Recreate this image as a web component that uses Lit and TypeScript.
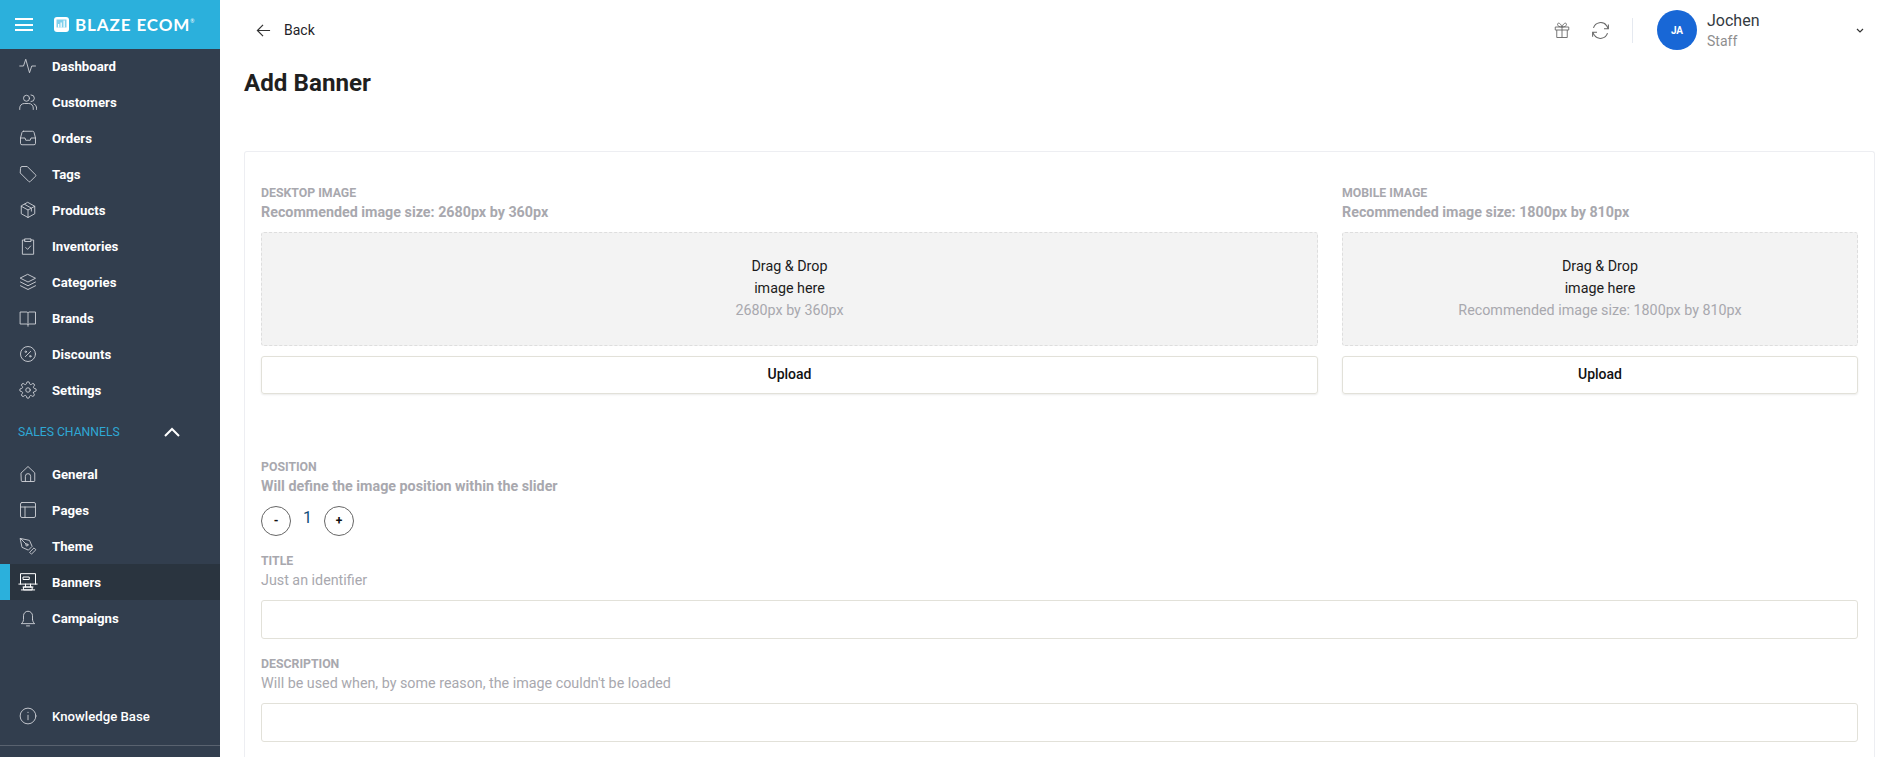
import { LitElement, css, html, svg } from "lit";
import { customElement } from "lit/decorators.js";

const icons: Record<string, unknown> = {
  pulse: svg`<path d="M1 12h5l3-9 5 18 3-9h5"/>`,
  users: svg`<circle cx="10" cy="7" r="4"/><path d="M1 22v-2a6 6 0 0 1 6-6h6a6 6 0 0 1 6 6v2M16 2.500a4.500 4.500 0 0 1 0 9M20 14.500a6 6 0 0 1 3.500 5.500v2"/>`,
  inbox: svg`<path d="M6 3h12a2 2 0 0 1 2 1.500L22 12v7a2 2 0 0 1-2 2H4a2 2 0 0 1-2-2v-7l2-7.500A2 2 0 0 1 6 3zM2 12h6l1 3h6l1-3h6"/>`,
  tag: svg`<path d="M2 4a2 2 0 0 1 2-2h7l11 11a1.500 1.500 0 0 1 0 2l-7 7a1.500 1.500 0 0 1-2 0L2 11z"/>`,
  box: svg`<path d="M12 2l9 5v10l-9 5-9-5V7zM3 7l9 5 9-5M12 12v10M7.500 4.500l9 5v4"/>`,
  clipboard: svg`<path d="M8 4H4.500v19h15V4H16M8 2.500h8v3.500H8zM9 14l2.500 2.500L15.500 12"/>`,
  layers: svg`<path d="M12 2l10 5-10 5L2 7zM2 12l10 5 10-5M2 17l10 5 10-5"/>`,
  book: svg`<path d="M2 4h9l1 1 1-1h9v16h-9l-1 1-1-1H2zM12 5v18"/>`,
  percent: svg`<circle cx="12" cy="12" r="10"/><path d="M15.500 8.500l-7 7"/><circle cx="9" cy="9" r="1"/><circle cx="15" cy="15" r="1"/>`,
  gear: svg`<circle cx="12" cy="12" r="3"/><path d="M19.400 15a1.700 1.700 0 0 0 .3 1.800l.1.100a2 2 0 1 1-2.900 2.900l-.1-.1a1.700 1.700 0 0 0-2.800 1.200V21a2 2 0 0 1-4 0v-.1a1.700 1.700 0 0 0-2.900-1.200l-.1.100a2 2 0 1 1-2.800-2.800l.1-.1a1.700 1.700 0 0 0-1.200-2.900H3a2 2 0 0 1 0-4h.1a1.700 1.700 0 0 0 1.200-2.900l-.1-.1a2 2 0 1 1 2.800-2.800l.1.100a1.700 1.700 0 0 0 2.900-1.200V3a2 2 0 0 1 4 0v.1a1.700 1.700 0 0 0 2.900 1.200l.1-.1a2 2 0 1 1 2.800 2.800l-.1.100a1.700 1.700 0 0 0 1.200 2.900h.1a2 2 0 0 1 0 4h-.1a1.700 1.700 0 0 0-1.500 1z"/>`,
  home: svg`<path d="M3 10.500L12 2l9 8.500V21a1 1 0 0 1-1 1H4a1 1 0 0 1-1-1zM8.500 22v-7a3.500 3.500 0 0 1 7 0v7"/>`,
  layout: svg`<rect x="2" y="2" width="20" height="20" rx="2"/><path d="M2 8h20M8 8v14"/>`,
  pen: svg`<path d="M2 2l12 2.500 3.500 8-5 5-8-3.500zM2 2l7.500 7.500M14.500 20l5.500-5.500 2.500 2.500-5.500 5.500z"/><circle cx="10.500" cy="10.500" r="1.500"/>`,
  monitor: svg`<path d="M3 14.500V2h18v12.500M1 14.500h22M6.500 6h7v3h-7zM9 14.500V18M15 14.500V18M6 18h12M7 21.500h10V18H7zM4 21.500h16"/>`,
  bell: svg`<path d="M18 14V9a6 6 0 1 0-12 0v5c0 3-2 5-3 5.500h18c-1-.5-3-2.500-3-5.500zM10 22.500h4"/>`,
  info: svg`<circle cx="12" cy="12" r="10.500"/><path d="M12 11v6M12 7v.5"/>`,
};

type Item = { label: string; icon: string; active?: boolean };

const mainNav: Item[] = [
  { label: "Dashboard", icon: "pulse" },
  { label: "Customers", icon: "users" },
  { label: "Orders", icon: "inbox" },
  { label: "Tags", icon: "tag" },
  { label: "Products", icon: "box" },
  { label: "Inventories", icon: "clipboard" },
  { label: "Categories", icon: "layers" },
  { label: "Brands", icon: "book" },
  { label: "Discounts", icon: "percent" },
  { label: "Settings", icon: "gear" },
];

const channelNav: Item[] = [
  { label: "General", icon: "home" },
  { label: "Pages", icon: "layout" },
  { label: "Theme", icon: "pen" },
  { label: "Banners", icon: "monitor", active: true },
  { label: "Campaigns", icon: "bell" },
];

@customElement("app-root")
export class AppRoot extends LitElement {
  static styles = css`
    :host {
      display: flex;
      height: 757px;
      overflow: hidden;
      font-family: Roboto, "Liberation Sans", sans-serif;
      background: #fff;
      color: #1f1f1f;
    }
    .sidebar {
      width: 220px;
      flex: none;
      display: flex;
      flex-direction: column;
      background: #323e4e;
      color: #fff;
    }
    .brand {
      height: 49px;
      flex: none;
      display: flex;
      align-items: center;
      padding-left: 15px;
      background: #2bb0dc;
    }
    .burger {
      width: 18px;
      display: flex;
      flex-direction: column;
      gap: 3.5px;
      margin-right: 21px;
    }
    .burger span {
      height: 2px;
      background: #fff;
    }
    .logo {
      width: 15px;
      height: 15px;
      margin-right: 6px;
    }
    .logo svg {
      display: block;
      width: 15px;
      height: 15px;
    }
    .logo-text {
      font-family: Lato, Roboto, sans-serif;
      font-size: 17px;
      font-weight: 700;
      letter-spacing: 0.9px;
      white-space: nowrap;
    }
    .logo-text sup {
      font-size: 5px;
      font-weight: 400;
      vertical-align: 8px;
      letter-spacing: 0;
      line-height: 0;
    }
    .nav {
      display: flex;
      flex-direction: column;
    }
    .nav.first {
      margin-top: -1px;
    }
    .item {
      height: 36px;
      display: flex;
      align-items: center;
      padding-left: 19px;
      font-size: 13.2px;
      font-weight: 700;
      box-sizing: border-box;
    }
    .item svg {
      width: 18px;
      height: 18px;
      flex: none;
      margin-right: 15px;
      fill: none;
      stroke: #d0d3d8;
      stroke-width: 1.2;
      stroke-linecap: round;
      stroke-linejoin: round;
    }
    .item.active {
      background: #2a343f;
      border-left: 10px solid #2bb0dc;
      padding-left: 9px;
    }
    .item.active svg {
      stroke: #fff;
      width: 20px;
      height: 20px;
      margin-left: -1px;
      margin-right: 14px;
    }
    .channels {
      height: 36px;
      margin-top: 6px;
      margin-bottom: 6px;
      padding: 0 40px 0 18px;
      display: flex;
      align-items: center;
      justify-content: space-between;
      color: #2fa8d5;
      font-size: 12.2px;
    }
    .channels svg {
      width: 16px;
      height: 10px;
      fill: none;
      stroke: #fff;
      stroke-width: 2;
    }
    .spacer {
      flex: 1;
    }
    .item.kb {
      margin-bottom: 11px;
      font-weight: 500;
    }
    .rule {
      height: 1px;
      background: #59626f;
      flex: none;
      margin-bottom: 11px;
    }
    .main {
      flex: 1;
      min-width: 0;
      display: flex;
      flex-direction: column;
    }
    .topbar {
      height: 60px;
      flex: none;
      display: flex;
      align-items: center;
      padding-left: 36px;
      box-sizing: border-box;
    }
    .back {
      display: flex;
      align-items: center;
      gap: 13px;
      font-size: 14px;
      color: #1f2328;
    }
    .back svg {
      width: 15px;
      height: 15px;
      fill: none;
      stroke: #333;
      stroke-width: 1.3;
    }
    .top-right {
      margin-left: auto;
      display: flex;
      align-items: center;
      padding-right: 35px;
    }
    .tool {
      fill: none;
      stroke: #666;
      stroke-width: 1.2;
    }
    .gift {
      width: 18px;
      height: 18px;
      margin-right: 19px;
    }
    .refresh {
      width: 21px;
      height: 21px;
      margin-right: 15px;
    }
    .divider {
      width: 1px;
      height: 25px;
      background: #e5e9f0;
      margin: 0 24px 0 6px;
    }
    .avatar {
      width: 40px;
      height: 40px;
      border-radius: 50%;
      background: #1867d6;
      color: #fff;
      font-size: 10px;
      font-weight: 700;
      display: flex;
      align-items: center;
      justify-content: center;
      margin-right: 10px;
    }
    .user {
      width: 149px;
      line-height: 1;
      padding-top: 1px;
    }
    .user-name {
      font-size: 16px;
      color: #333a3f;
      margin-bottom: 5px;
    }
    .user-role {
      font-size: 14px;
      color: #8e8e8e;
    }
    .caret {
      width: 8px;
      height: 5px;
      fill: none;
      stroke: #333;
      stroke-width: 1.2;
    }
    h1 {
      margin: 9px 0 0;
      padding-left: 24px;
      font-size: 24.2px;
      font-weight: 700;
      line-height: 28px;
      color: #1f1f1f;
    }
    .card {
      margin: 54px 24px 0;
      flex: 1;
      border: 1px solid #edeef2;
      border-bottom: 0;
      border-radius: 3px 3px 0 0;
      padding: 34px 16px 0;
      box-sizing: border-box;
      min-height: 0;
    }
    .uploads {
      display: grid;
      grid-template-columns: 1057px 516px;
      column-gap: 24px;
    }
    .label {
      font-size: 12.3px;
      font-weight: 700;
      line-height: 14px;
      color: #a8a8ae;
    }
    .hint {
      font-size: 14.3px;
      line-height: 20px;
      margin-top: 2px;
      color: #a8a8ae;
    }
    .hint.strong {
      font-weight: 700;
    }
    .drop {
      margin-top: 10px;
      height: 114px;
      box-sizing: border-box;
      background: #f3f3f3;
      border: 1px dashed #dedede;
      border-radius: 3px;
      padding-bottom: 2px;
      display: flex;
      flex-direction: column;
      justify-content: center;
      align-items: center;
      font-size: 14.3px;
      line-height: 22px;
      color: #1b1b1b;
    }
    .drop .muted {
      color: #a8a8ae;
    }
    .upload {
      margin-top: 10px;
      height: 38px;
      box-sizing: border-box;
      border: 1px solid #e2e1d9;
      border-radius: 3px;
      box-shadow: 0 1px 2px rgba(0, 0, 0, 0.08);
      display: flex;
      align-items: center;
      justify-content: center;
      font-size: 14px;
      font-weight: 500;
      color: #111;
      padding-bottom: 2px;
    }
    .position {
      margin-top: 66px;
    }
    .stepper {
      display: flex;
      align-items: center;
      margin-top: 10px;
      height: 30px;
    }
    .round {
      width: 30px;
      height: 30px;
      box-sizing: border-box;
      border: 1px solid #666;
      border-radius: 50%;
      display: flex;
      align-items: center;
      justify-content: center;
      font-size: 12px;
      font-weight: 700;
      color: #111;
    }
    .value {
      width: 33px;
      text-align: center;
      font-size: 16px;
      color: #0f4d78;
      margin-top: -7px;
    }
    .field {
      margin-top: 18px;
    }
    .input {
      margin-top: 10px;
      height: 39px;
      box-sizing: border-box;
      border: 1px solid #e2e1d9;
      border-radius: 3px;
    }
  `;

  private renderItem(item: Item) {
    return html`<div class="item ${item.active ? "active" : ""}">
      <svg viewBox="0 0 24 24">${icons[item.icon]}</svg>${item.label}
    </div>`;
  }

  private renderUpload(title: string, hint: string, muted: string) {
    return html`<div>
      <div class="label">${title}</div>
      <div class="hint strong">${hint}</div>
      <div class="drop">
        <div>Drag &amp; Drop</div>
        <div>image here</div>
        <div class="muted">${muted}</div>
      </div>
      <div class="upload">Upload</div>
    </div>`;
  }

  render() {
    return html`
      <aside class="sidebar">
        <div class="brand">
          <div class="burger"><span></span><span></span><span></span></div>
          <div class="logo">
            <svg viewBox="0 0 15 15">
              <rect width="15" height="15" rx="3" fill="#fff" />
              <path d="M2.500 2.500h10v8h-10z" fill="#7fd0ec" />
              <path d="M4 7h1.300v3.500H4zM6.500 5.500h1.300v5H6.500zM9.500 3.500h1.300v7H9.500z" fill="#fff" />
            </svg>
          </div>
          <div class="logo-text">BLAZE ECOM<sup>®</sup></div>
        </div>
        <nav class="nav first">${mainNav.map((i) => this.renderItem(i))}</nav>
        <div class="channels">
          <span>SALES CHANNELS</span>
          <svg viewBox="0 0 16 10"><path d="M1 9l7-7 7 7" /></svg>
        </div>
        <nav class="nav">${channelNav.map((i) => this.renderItem(i))}</nav>
        <div class="spacer"></div>
        <div class="item kb">
          <svg viewBox="0 0 24 24">${icons.info}</svg>Knowledge Base
        </div>
        <div class="rule"></div>
      </aside>
      <main class="main">
        <div class="topbar">
          <div class="back">
            <svg viewBox="0 0 16 16"><path d="M15 8H1.500M7.500 2L1.500 8l6 6" /></svg>
            Back
          </div>
          <div class="top-right">
            <svg class="tool gift" viewBox="0 0 24 24">
              <path d="M3 8h18v4H3zM5 12v10h14V12M12 8v14M12 8C9 8 6 7 6 4.500S10 2 12 8zM12 8c3 0 6-1 6-3.500S14 2 12 8z" />
            </svg>
            <svg class="tool refresh" viewBox="0 0 24 24">
              <path d="M21 5v5h-5M3 19v-5h5M4 9a8.500 8.500 0 0 1 15-2.500l2 3.500M20 15a8.500 8.500 0 0 1-15 2.500L3 14" />
            </svg>
            <div class="divider"></div>
            <div class="avatar">JA</div>
            <div class="user">
              <div class="user-name">Jochen</div>
              <div class="user-role">Staff</div>
            </div>
            <svg class="caret" viewBox="0 0 8 5"><path d="M1 1l3 3 3-3" /></svg>
          </div>
        </div>
        <h1>Add Banner</h1>
        <section class="card">
          <div class="uploads">
            ${this.renderUpload("DESKTOP IMAGE", "Recommended image size: 2680px by 360px", "2680px by 360px")}
            ${this.renderUpload("MOBILE IMAGE", "Recommended image size: 1800px by 810px", "Recommended image size: 1800px by 810px")}
          </div>
          <div class="position">
            <div class="label">POSITION</div>
            <div class="hint strong">Will define the image position within the slider</div>
            <div class="stepper">
              <div class="round">-</div>
              <div class="value">1</div>
              <div class="round">+</div>
            </div>
          </div>
          <div class="field">
            <div class="label">TITLE</div>
            <div class="hint">Just an identifier</div>
            <div class="input"></div>
          </div>
          <div class="field">
            <div class="label">DESCRIPTION</div>
            <div class="hint">Will be used when, by some reason, the image couldn't be loaded</div>
            <div class="input"></div>
          </div>
        </section>
      </main>
    `;
  }
}
